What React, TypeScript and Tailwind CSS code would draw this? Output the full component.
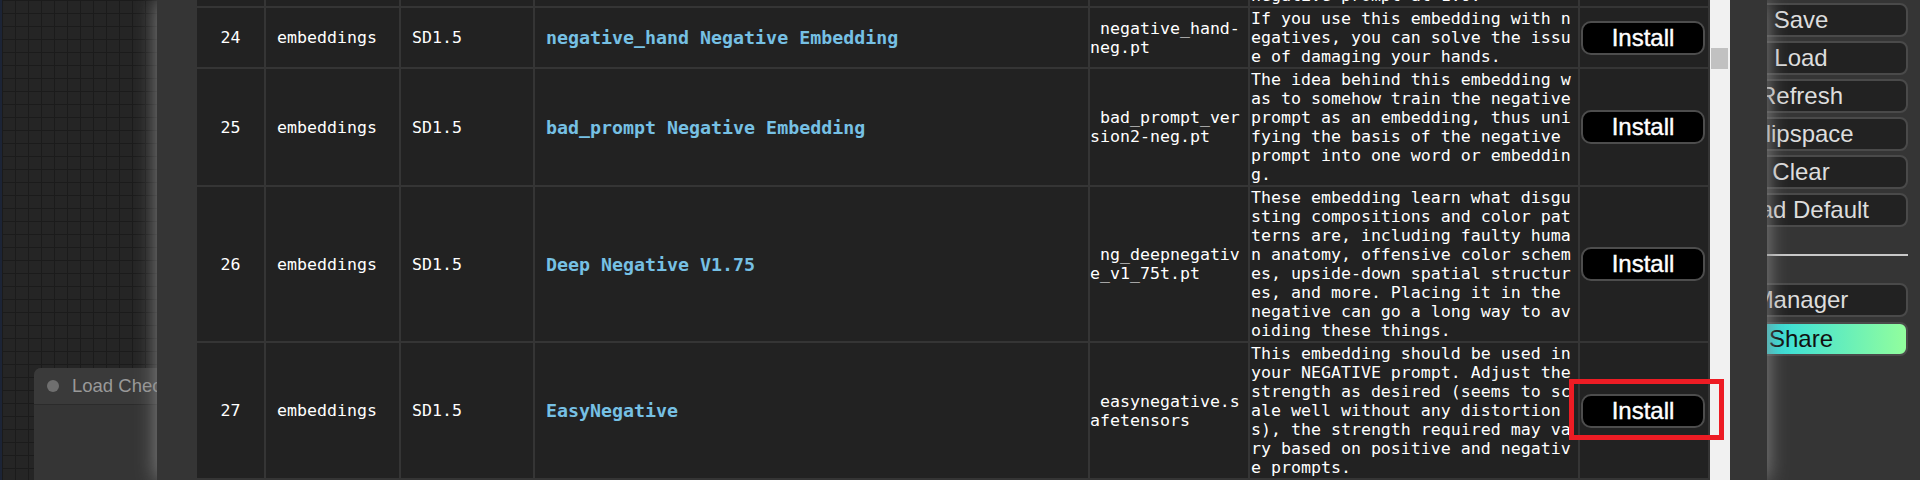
import React from "react";

type Row = { n: number; type: string; base: string; name: string; file: string; desc: string };

const rows: Row[] = [
  {
    n: 23,
    type: "embeddings",
    base: "SD1.5",
    name: "bad-hands-5",
    file: "bad-hands-5.pt",
    desc: "Negative embedding trained on low quality images. Use it in the negative prompt at 1.0.",
  },
  {
    n: 24,
    type: "embeddings",
    base: "SD1.5",
    name: "negative_hand Negative Embedding",
    file: "negative_hand-neg.pt",
    desc: "If you use this embedding with negatives, you can solve the issue of damaging your hands.",
  },
  {
    n: 25,
    type: "embeddings",
    base: "SD1.5",
    name: "bad_prompt Negative Embedding",
    file: "bad_prompt_version2-neg.pt",
    desc: "The idea behind this embedding was to somehow train the negative prompt as an embedding, thus unifying the basis of the negative prompt into one word or embedding.",
  },
  {
    n: 26,
    type: "embeddings",
    base: "SD1.5",
    name: "Deep Negative V1.75",
    file: "ng_deepnegative_v1_75t.pt",
    desc: "These embedding learn what disgusting compositions and color patterns are, including faulty human anatomy, offensive color schemes, upside-down spatial structures, and more. Placing it in the negative can go a long way to avoiding these things.",
  },
  {
    n: 27,
    type: "embeddings",
    base: "SD1.5",
    name: "EasyNegative",
    file: "easynegative.safetensors",
    desc: "This embedding should be used in your NEGATIVE prompt. Adjust the strength as desired (seems to scale well without any distortions), the strength required may vary based on positive and negative prompts.",
  },
];

const menuItems = ["Save", "Load", "Refresh", "Clipspace", "Clear", "Load Default"];

export default function App() {
  return (
    <div className="relative h-[480px] w-[1920px] overflow-hidden border-l-2 border-[#1c2436] bg-[#252525] bg-[linear-gradient(to_right,#1b1b1b_1px,transparent_1px),linear-gradient(to_bottom,#1b1b1b_1px,transparent_1px)] bg-[size:13px_13px] font-['Liberation_Sans',Arial,sans-serif]">
      {/* canvas node */}
      <div className="absolute left-[32px] top-[368px] h-[200px] w-[300px] overflow-hidden rounded-t-[7px] bg-[#353535]">
        <div className="flex h-[37px] items-center border-b border-[#2b2b2b] bg-[#3a3a3a] pl-[13px]">
          <div className="h-[12px] w-[12px] rounded-full bg-[#6f6f6f]" />
          <span className="ml-[13px] text-[18.5px] leading-none text-[#999999]">Load Checkpoint</span>
        </div>
      </div>

      {/* side menu */}
      <div className="absolute right-0 top-0 flex h-full w-[238px] flex-col bg-[#353535] px-[12px] pt-[3px] text-[24px] text-[#dddddd]">
        {menuItems.map((l) => (
          <button
            key={l}
            className="mb-[4px] h-[34px] w-full shrink-0 rounded-[8px] border-2 border-[#4a4a4a] bg-[#222222] leading-none"
          >
            {l}
          </button>
        ))}
        <div className="mt-[23px] h-[2px] shrink-0 bg-[#c8c8c8]" />
        <button className="mt-[27px] h-[34px] w-full shrink-0 rounded-[8px] border-2 border-[#4a4a4a] bg-[#222222] leading-none">
          Manager
        </button>
        <button className="mt-[5px] h-[34px] w-full shrink-0 rounded-[8px] border-2 border-[#4a4a4a] bg-[linear-gradient(90deg,#00C9FF_0%,#92FE9D_100%)] leading-none text-[#111111]">
          Share
        </button>
      </div>

      {/* dialog */}
      <div className="absolute left-[155px] top-0 z-10 flex h-full w-[1610px] bg-[#353535] pl-[38px] pr-[37px] shadow-[0_0_20px_#888888]">
        <div className="h-full w-[1515px] overflow-hidden">
          <table className="-mt-[55px] w-[1515px] table-fixed border-separate border-spacing-[2px] font-['DejaVu_Sans_Mono',monospace] text-[16.6px] leading-[19px] text-white">
            <colgroup>
              <col className="w-[67px]" />
              <col className="w-[133px]" />
              <col className="w-[132px]" />
              <col className="w-[553px]" />
              <col className="w-[158px]" />
              <col className="w-[328px]" />
              <col className="w-[128px]" />
            </colgroup>
            <tbody>
              {rows.map((r) => (
                <tr key={r.n}>
                  <td className="bg-[#222222] p-[1px] text-center align-middle">{r.n}</td>
                  <td className="bg-[#222222] p-[1px] pl-[11px] align-middle">{r.type}</td>
                  <td className="bg-[#222222] p-[1px] pl-[11px] align-middle">{r.base}</td>
                  <td className="bg-[#222222] p-[1px] pl-[11px] align-middle text-[18.3px] font-bold text-[#76c0e4]">
                    {r.name}
                  </td>
                  <td className="break-all bg-[#222222] p-0 align-middle">{"\u00a0" + r.file}</td>
                  <td className="break-all bg-[#222222] p-[1px] align-middle">{r.desc}</td>
                  <td className="bg-[#222222] p-[1px] align-middle">
                    <button className="flex h-[34px] w-[124px] items-center justify-center rounded-[10px] border-2 border-[#4d4d4d] bg-black font-['Liberation_Sans',Arial,sans-serif] text-[24px] leading-none text-white [-webkit-text-stroke:0.4px_#ffffff]">
                      Install
                    </button>
                  </td>
                </tr>
              ))}
            </tbody>
          </table>
        </div>
        <div className="h-full w-[20px] shrink-0 bg-[#f1f1f1] pl-[1px] pt-[48px]">
          <div className="h-[21px] w-[17px] bg-[#c1c1c1]" />
        </div>
      </div>

      {/* annotation */}
      <div className="absolute left-[1567px] top-[379px] z-20 h-[61px] w-[155px] border-[5px] border-[#ed1c24]" />
    </div>
  );
}
